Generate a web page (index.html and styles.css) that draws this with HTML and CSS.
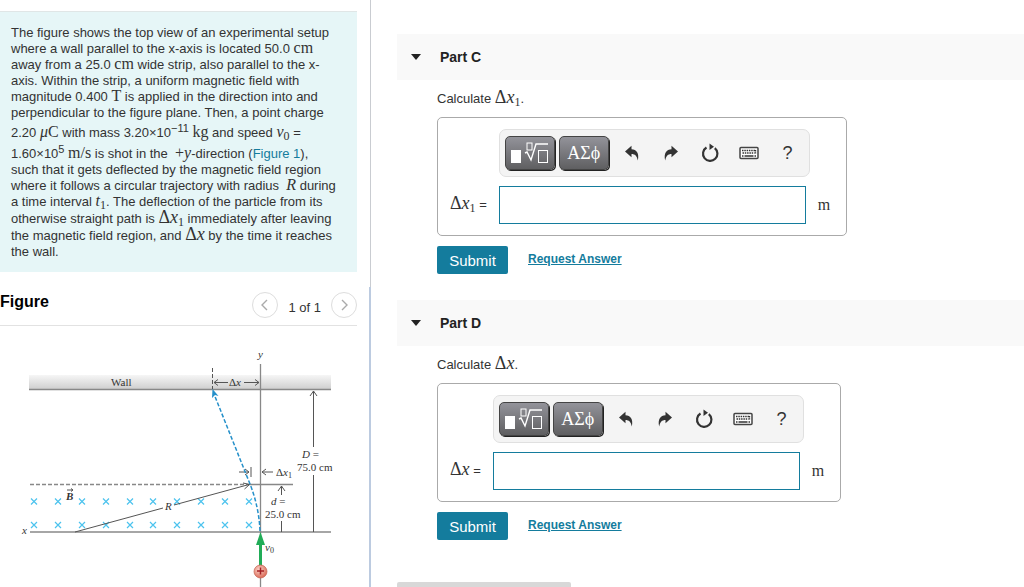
FILE: index.html
```html
<!DOCTYPE html>
<html lang="en">
<head>
    <meta charset="UTF-8">
    <meta name="viewport" content="width=device-width, initial-scale=1.0">
    <title>Magnetic deflection</title>
    <link rel="stylesheet" href="styles.css">
</head>
<body>
    <!-- Shared toolbar icons -->
    <svg class="sprite" aria-hidden="true">
        <symbol id="root" viewBox="0 0 40 24">
            <rect x="1" y="9" width="10" height="13" fill="#fff"/>
            <path d="M15 12l2-1 4 8 5-16h12" fill="none" stroke="#fff" stroke-width="1.4"/>
            <rect x="17" y="2" width="5" height="7" fill="none" stroke="#fff"/>
            <rect x="28.500" y="9.500" width="9" height="12" fill="none" stroke="#fff"/>
        </symbol>
        <symbol id="undo" viewBox="0 0 16 16">
            <path d="M1 6.500L7.500 .8v3.500c5 .2 8 4 6.300 11.200C13 11 11 9 7.500 9v3.300z"/>
        </symbol>
        <symbol id="redo" viewBox="0 0 16 16">
            <path d="M15 6.500L8.500 .8v3.500c-5 .2-8 4-6.300 11.200C3 11 5 9 8.500 9v3.300z"/>
        </symbol>
        <symbol id="reset" viewBox="0 0 18 20">
            <path d="M5.500 4.500a7.200 7.200 0 1 0 8.300.6" fill="none" stroke="#333" stroke-width="2.200"/>
            <path d="M8.500 .5l4.500 3.200L8.500 7z"/>
        </symbol>
        <symbol id="keyboard" viewBox="0 0 20 14">
            <rect x="1" y="1.500" width="18" height="11" rx="1" fill="#fff" stroke="#444" stroke-width="1.500"/>
            <path d="M3 4.500h14M3.500 7h12M16.500 4v3.500" fill="none" stroke="#333" stroke-width="1.400" stroke-dasharray="1.500 .8"/>
            <path d="M3 10h1.500M5.500 10h9M15.500 10H17" stroke="#333" stroke-width="1.300"/>
        </symbol>
    </svg>

    <div class="page">
        <aside class="side">
            <section class="prompt-wrap">
                <p class="prompt">The figure shows the top view of an experimental setup where a wall parallel to the x-axis is located 50.0 <span class="math">cm</span> away from a 25.0 <span class="math">cm</span> wide strip, also parallel to the x-axis. Within the strip, a uniform magnetic field with magnitude 0.400 <span class="math">T</span> is applied in the direction into and perpendicular to the figure plane. Then, a point charge 2.20 <span class="math"><i>μ</i>C</span> with mass 3.20×10<sup>−11</sup> <span class="math">kg</span> and speed <span class="math"><i>v</i><sub>0</sub></span> = 1.60×10<sup>5</sup> <span class="math">m/s</span> is shot in the &nbsp;<span class="math">+<i>y</i></span>-direction (<a href="#figure">Figure 1</a>),<br>such that it gets deflected by the magnetic field region where it follows a circular trajectory with radius &nbsp;<i class="math">R</i> during a time interval <span class="math"><i>t</i><sub>1</sub></span>. The deflection of the particle from its otherwise straight path is <span class="math var">Δ<i>x</i><sub>1</sub></span> immediately after leaving the magnetic field region, and <span class="math var">Δ<i>x</i></span> by the time it reaches the wall.</p>
            </section>

            <section class="figure" id="figure">
                <header class="figure-head">
                    <h2>Figure</h2>
                    <div class="pager">
                        <button type="button" aria-label="Previous figure"><svg viewBox="0 0 12 12"><path d="M8 1L3 6l5 5"/></svg></button>
                        <span>1 of 1</span>
                        <button type="button" aria-label="Next figure"><svg viewBox="0 0 12 12"><path d="M4 1l5 5-5 5"/></svg></button>
                    </div>
                </header>
                <svg class="diagram" viewBox="0 0 357 261" role="img" aria-label="Particle deflected by a magnetic field strip">
                    <defs>
                        <linearGradient id="wall" x1="0" y1="0" x2="0" y2="1">
                            <stop offset="0" stop-color="#f6f6f6"/>
                            <stop offset="1" stop-color="#cfcfcf"/>
                        </linearGradient>
                        <radialGradient id="ball" cx=".4" cy=".35" r=".7">
                            <stop offset="0" stop-color="#fbd5cb"/>
                            <stop offset="1" stop-color="#d9634f"/>
                        </radialGradient>
                        <path id="cross" d="M-3-3l6 6M3-3l-6 6"/>
                        <g id="field-row">
                            <use href="#cross" x="34"/><use href="#cross" x="58"/><use href="#cross" x="82"/>
                            <use href="#cross" x="106"/><use href="#cross" x="130"/><use href="#cross" x="153"/>
                            <use href="#cross" x="177"/><use href="#cross" x="201"/><use href="#cross" x="225"/>
                            <use href="#cross" x="249"/>
                        </g>
                    </defs>

                    <!-- wall -->
                    <rect x="29" y="49" width="302" height="14" fill="url(#wall)"/>
                    <path class="axis" d="M29 63.500h302"/>
                    <text class="wall-label" x="111" y="60">Wall</text>

                    <!-- field strip -->
                    <path class="axis" d="M30 206h301"/>
                    <path class="axis" d="M30 158.500h220" stroke-dasharray="4 2"/>
                    <path class="axis" d="M250 158.500h43"/>
                    <g stroke="#4cc3ee" stroke-width="1.200">
                        <use href="#field-row" y="175.500"/>
                        <use href="#field-row" y="199"/>
                    </g>
                    <text class="vector" x="66" y="174">B</text>
                    <path class="thin" d="M67 164h6M71 162.500l2 1.500-2 1.500"/>

                    <!-- y axis -->
                    <path class="axis" d="M260.500 38V261"/>
                    <text x="258" y="32"><tspan class="it">y</tspan></text>
                    <text x="22" y="208"><tspan class="it">x</tspan></text>

                    <!-- radius -->
                    <path class="thin" d="M75 206l88-24M174 179l75-20.500M243 157l6.500 1.500-5 4.500"/>
                    <text x="165" y="184"><tspan class="it">R</tspan></text>

                    <!-- dimensions -->
                    <path class="thin" d="M212.500 42v21" stroke-dasharray="4 2"/>
                    <path class="thin" d="M214 56.500h14M218 53.500l-4 3 4 3M244 56.500h15M255 53.500l4 3-4 3"/>
                    <text x="229" y="60">Δ<tspan class="it">x</tspan></text>
                    <path class="thin" d="M239 146h10M245 143l4 3-4 3M251 141v10M273 146h-11M266 143l-4 3 4 3"/>
                    <text x="276" y="150">Δ<tspan class="it">x</tspan><tspan class="sub" dy="2">1</tspan></text>
                    <path class="thin" d="M313.500 65v56M310 70l3.500-5 3.500 5M313.500 149v57"/>
                    <text x="302" y="132"><tspan class="it">D</tspan> =</text>
                    <text x="297" y="145">75.0 cm</text>
                    <path class="thin" d="M281.500 160v9M278 165l3.500-5 3.500 5M281.500 195v11"/>
                    <text x="271" y="179"><tspan class="it">d</tspan> =</text>
                    <text x="265" y="192">25.0 cm</text>

                    <!-- trajectory -->
                    <path d="M260 205Q259 181 250 158L214 68" fill="none" stroke="#2590ca" stroke-width="1.500" stroke-dasharray="4 2"/>
                    <path d="M212.500 63l6 7-3.500-1-3 3z" fill="#2590ca"/>

                    <!-- charge -->
                    <path d="M260.500 240v-25" stroke="#21ac57" stroke-width="3"/>
                    <path d="M260.500 206l4.500 13h-9z" fill="#21ac57"/>
                    <text x="265" y="225"><tspan class="it">v</tspan><tspan class="sub" dy="2">0</tspan></text>
                    <circle cx="260.500" cy="245.500" r="6.500" fill="url(#ball)" stroke="#c66352" stroke-width=".7"/>
                    <path d="M257 245h7M260.500 241.500v7" stroke="#a51f23" stroke-width="1.500"/>
                </svg>
            </section>
        </aside>

        <main class="parts">
            <section class="part">
                <header class="part-head">
                    <span class="caret"></span>
                    <h2>Part C</h2>
                </header>
                <form class="part-body">
                    <p class="task">Calculate <span class="math var">Δ<i>x</i><sub>1</sub></span>.</p>
                    <div class="answer">
                        <div class="toolbar">
                            <button type="button" class="key" aria-label="Templates"><svg class="icon-root"><use href="#root"/></svg></button>
                            <button type="button" class="key">ΑΣϕ</button>
                            <div class="tools">
                                <button type="button" aria-label="Undo"><svg class="icon-small"><use href="#undo"/></svg></button>
                                <button type="button" aria-label="Redo"><svg class="icon-small"><use href="#redo"/></svg></button>
                                <button type="button" aria-label="Reset"><svg class="icon-reset"><use href="#reset"/></svg></button>
                                <button type="button" aria-label="Keyboard shortcuts"><svg class="icon-keyboard"><use href="#keyboard"/></svg></button>
                                <button type="button">?</button>
                            </div>
                        </div>
                        <label for="answer-c"><span class="math var">Δ<i>x</i><sub>1</sub></span> =</label>
                        <input type="text" id="answer-c">
                        <span class="unit math">m</span>
                    </div>
                    <div class="actions">
                        <button type="submit" class="submit">Submit</button>
                        <a href="#">Request Answer</a>
                    </div>
                </form>
            </section>

            <section class="part">
                <header class="part-head">
                    <span class="caret"></span>
                    <h2>Part D</h2>
                </header>
                <form class="part-body">
                    <p class="task">Calculate <span class="math var">Δ<i>x</i></span>.</p>
                    <div class="answer">
                        <div class="toolbar">
                            <button type="button" class="key" aria-label="Templates"><svg class="icon-root"><use href="#root"/></svg></button>
                            <button type="button" class="key">ΑΣϕ</button>
                            <div class="tools">
                                <button type="button" aria-label="Undo"><svg class="icon-small"><use href="#undo"/></svg></button>
                                <button type="button" aria-label="Redo"><svg class="icon-small"><use href="#redo"/></svg></button>
                                <button type="button" aria-label="Reset"><svg class="icon-reset"><use href="#reset"/></svg></button>
                                <button type="button" aria-label="Keyboard shortcuts"><svg class="icon-keyboard"><use href="#keyboard"/></svg></button>
                                <button type="button">?</button>
                            </div>
                        </div>
                        <label for="answer-d"><span class="math var">Δ<i>x</i></span> =</label>
                        <input type="text" id="answer-d">
                        <span class="unit math">m</span>
                    </div>
                    <div class="actions">
                        <button type="submit" class="submit">Submit</button>
                        <a href="#">Request Answer</a>
                    </div>
                </form>
            </section>

            <div class="next-bar"></div>
        </main>
    </div>
</body>
</html>
```
FILE: styles.css
```css
* {
    box-sizing: border-box;
}

body {
    margin: 0;
    background: #fff;
    color: #333;
    font-family: "Liberation Sans", Arial, sans-serif;
    font-size: 13px;
    line-height: 16px;
}

h2, p {
    margin: 0;
}

a {
    color: #147c9d;
}

button {
    font-family: inherit;
    padding: 0;
    border: none;
    background: none;
    cursor: pointer;
}

.sprite {
    display: none;
}

.page {
    display: flex;
    min-height: 100vh;
}

/* math text */
.math {
    font-family: "Liberation Serif", "Times New Roman", serif;
    font-size: 16px;
    line-height: 12px;
}

.var {
    font-size: 18px;
}

sub, sup {
    font-size: 12px;
    line-height: 12px;
}

sub {
    vertical-align: -3px;
}

sup {
    font-size: 11px;
    line-height: 14px;
    vertical-align: 5px;
}

/* left column */
.side {
    display: flex;
    flex-direction: column;
    flex: none;
    width: 36%;
    min-width: 371px;
}

.prompt-wrap {
    padding: 11px 13px 15px 0;
    border-right: 1px solid #c9ccd1;
}

.prompt {
    padding: 13px 16px 12px 11px;
    border-top: 1px solid #e0e6e6;
    background: #e6f6f7;
}

.prompt a {
    text-decoration: none;
}

.figure {
    flex: 1;
    padding-right: 12px;
    border-right: 2px solid #bccbe0;
}

.figure-head {
    display: flex;
    justify-content: space-between;
    height: 39px;
    padding-top: 5px;
    border-bottom: 1px solid #e2e2e2;
}

.figure-head h2 {
    padding-top: 1px;
    color: #000;
    font-size: 16px;
    line-height: 18px;
}

.pager {
    display: flex;
    gap: 10px;
}

.pager span {
    padding-top: 8px;
}

.pager button {
    display: flex;
    align-items: center;
    justify-content: center;
    width: 26px;
    height: 26px;
    border: 1px solid #ddd;
    border-radius: 50%;
}

.pager svg {
    width: 12px;
    height: 12px;
    fill: none;
    stroke: #aaa;
    stroke-width: 1.4px;
}

.diagram {
    display: block;
    width: 100%;
    fill: #333;
    font-family: "Liberation Serif", "Times New Roman", serif;
    font-size: 11px;
}

.diagram .axis {
    fill: none;
    stroke: #888;
    stroke-width: 1.3px;
}

.diagram .thin {
    fill: none;
    stroke: #555;
    stroke-width: 1px;
}

.diagram .it {
    font-style: italic;
}

.diagram .vector {
    font-style: italic;
    font-weight: bold;
}

.diagram .sub {
    font-size: 8px;
}

/* right column */
.parts {
    flex: 1;
    min-width: 0;
    padding: 34px 0 0 26px;
}

.part {
    margin-bottom: 26px;
}

.part-head {
    display: flex;
    align-items: center;
    gap: 19px;
    height: 46px;
    padding-left: 14px;
    background: #f9f9f9;
}

.part-head h2 {
    color: #222;
    font-size: 14px;
}

.caret {
    border: 5px solid transparent;
    border-top: 6px solid #222;
    border-bottom: none;
}

.part-body {
    padding-left: 40px;
}

.task {
    height: 37px;
    padding-top: 11px;
}

.answer {
    display: inline-grid;
    grid-template-columns: auto 307px auto;
    align-items: center;
    gap: 9px 12px;
    padding: 11px 16px 11px 12px;
    border: 1px solid #aaa;
    border-radius: 5px;
    vertical-align: top;
}

.toolbar {
    display: flex;
    grid-column: 2 / 4;
    gap: 4px;
    width: 311px;
    height: 48px;
    padding: 6px 2px 6px 5px;
    border: 1px solid #e0e0e0;
    border-radius: 7px;
    background: #f4f4f4;
}

.key {
    display: flex;
    align-items: center;
    justify-content: center;
    width: 50px;
    height: 34px;
    border: 1px solid #444;
    border-radius: 5px;
    background: linear-gradient(#93939a, #5f5f61);
    box-shadow: 1px 1px 0 #222;
    color: #fff;
    font-family: "Liberation Serif", "Times New Roman", serif;
    font-size: 18px;
}

.tools {
    display: flex;
    flex: 1;
}

.tools button {
    display: flex;
    flex: 1;
    align-items: center;
    justify-content: center;
    color: #333;
    font-size: 18px;
}

.tools svg {
    fill: #333;
}

.icon-root {
    width: 40px;
    height: 24px;
}

.icon-small {
    width: 16px;
    height: 16px;
}

.icon-reset {
    width: 18px;
    height: 20px;
}

.icon-keyboard {
    width: 20px;
    height: 14px;
}

.answer input {
    width: 100%;
    height: 38px;
    padding: 0 8px;
    border: 1px solid #147c9d;
    font-size: 16px;
}

.actions {
    display: flex;
    align-items: center;
    gap: 20px;
    margin-top: 10px;
}

.actions a {
    padding-bottom: 2px;
    font-size: 12px;
    font-weight: bold;
}

.submit {
    width: 71px;
    height: 28px;
    border-radius: 2px;
    background: #147c9d;
    color: #fff;
    font-size: 15px;
}

.next-bar {
    width: 174px;
    height: 5px;
    margin-top: 42px;
    border-radius: 2px 2px 0 0;
    background: #d8d8d8;
}
```
